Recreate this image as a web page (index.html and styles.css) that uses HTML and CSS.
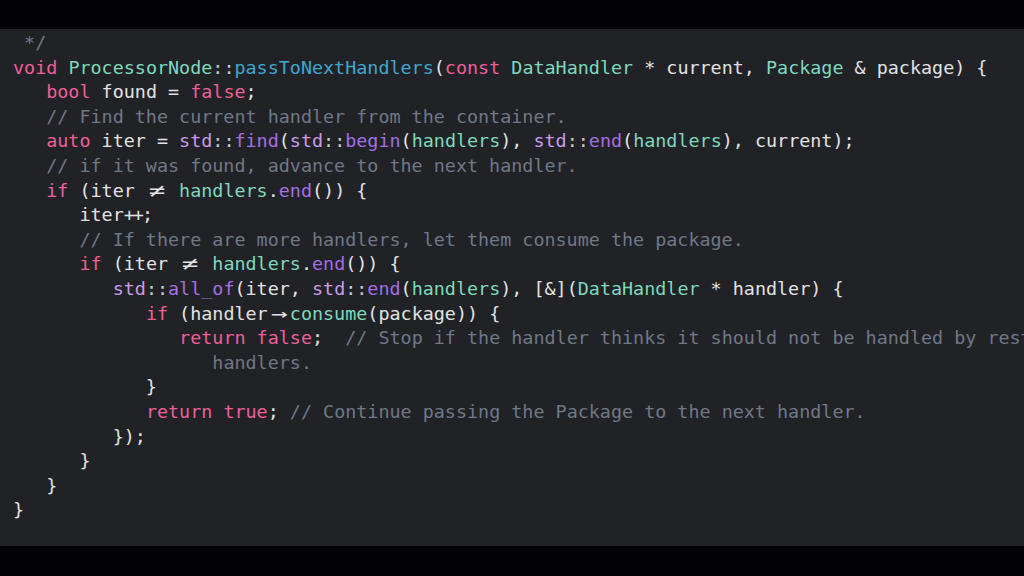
FILE: index.html
```html
<!DOCTYPE html>
<html lang="en">
<head>
<meta charset="utf-8">
<title>ProcessorNode::passToNextHandlers</title>
<link rel="stylesheet" href="styles.css">
</head>
<body>
<div class="frame">
<div class="bar"></div>
<main class="editor">
<pre class="code"><code><span class="c"> */</span>
<span class="k">void</span> <span class="t">ProcessorNode</span><span class="op">::</span><span class="fn">passToNextHandlers</span>(<span class="k">const</span> <span class="t">DataHandler</span> * current, <span class="t">Package</span> &amp; package) {
   <span class="k">bool</span> found = <span class="k">false</span>;
   <span class="c">// Find the current handler from the container.</span>
   <span class="k">auto</span> iter = <span class="ns">std</span><span class="op">::</span><span class="m">find</span>(<span class="ns">std</span><span class="op">::</span><span class="m">begin</span>(<span class="t">handlers</span>), <span class="ns">std</span><span class="op">::</span><span class="m">end</span>(<span class="t">handlers</span>), current);
   <span class="c">// if it was found, advance to the next handler.</span>
   <span class="k">if</span> (iter <span class="lig">≠</span> <span class="t">handlers</span>.<span class="m">end</span>()) {
      iter<span class="pp">++</span>;
      <span class="c">// If there are more handlers, let them consume the package.</span>
      <span class="k">if</span> (iter <span class="lig">≠</span> <span class="t">handlers</span>.<span class="m">end</span>()) {
         <span class="ns">std</span><span class="op">::</span><span class="m">all_of</span>(iter, <span class="ns">std</span><span class="op">::</span><span class="m">end</span>(<span class="t">handlers</span>), [&amp;](<span class="t">DataHandler</span> * handler) {
            <span class="k">if</span> (handler<span class="lig">→</span><span class="t">consume</span>(package)) {
               <span class="k">return</span> <span class="k">false</span>;  <span class="c">// Stop if the handler thinks it should not be handled by rest of the</span>
                  <span class="c">handlers.</span>
            }
            <span class="k">return</span> <span class="k">true</span>; <span class="c">// Continue passing the Package to the next handler.</span>
         });
      }
   }
}</code></pre>
</main>
<div class="bar bar-bottom"></div>
</div>
</body>
</html>
```
FILE: styles.css
```css
html, body {
  margin: 0;
  padding: 0;
  background: #030207;
  overflow: hidden;
}

.frame {
  width: 1024px;
  height: 576px;
  display: flex;
  flex-direction: column;
  overflow: hidden;
}

.bar {
  height: 29px;
  flex: none;
  background: #030207;
}

.bar-bottom {
  height: 30px;
}

.editor {
  flex: 1;
  background: #212226;
  overflow: hidden;
  padding: 2px 0 0 13px;
}

.code {
  margin: 0;
  font-family: "DejaVu Sans Mono", "Liberation Mono", monospace;
  font-size: 18.4px;
  line-height: 24.6px;
  color: #e2e2e4;
  white-space: pre;
}

.lig {
  display: inline-block;
  width: 2ch;
  text-align: center;
  transform: scaleX(1.5);
}

.pp {
  letter-spacing: -2px;
}

.k { color: #ee5f98; }
.t { color: #7ed9bd; }
.fn { color: #3ea7cf; }
.ns { color: #c99be9; }
.m { color: #a46fe2; }
.c { color: #6f7886; }
.op { color: #c9c9cc; }
```
